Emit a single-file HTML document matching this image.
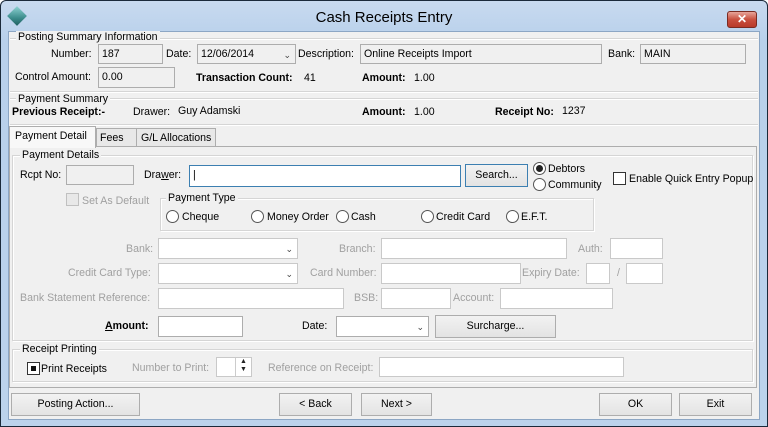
<!DOCTYPE html>
<html><head><meta charset="utf-8"><style>
*{box-sizing:border-box;margin:0;padding:0}
body{width:768px;height:427px;overflow:hidden;background:#fff;font-family:"Liberation Sans",sans-serif;font-size:10.6px;color:#000;position:relative}
.a{position:absolute;white-space:nowrap}
.frame{position:absolute;left:0;top:0;width:768px;height:427px;border:1px solid #1b2a3a;border-radius:6px 6px 0 0;background:linear-gradient(#c8daef,#b8d0eb 40px,#bcd3ec);}
.client{position:absolute;left:8px;top:31px;width:752px;height:389px;background:#f0f0f0;border:1px solid #8ca6c4}
.in{position:absolute;background:#fff;border:1px solid #c9c9c9;padding:2px 3px;line-height:14px}
.ro{background:#f0f0f0;border-color:#adadad}
.btn{position:absolute;background:linear-gradient(#f2f2f2,#e3e3e3);border:1px solid #adadad;text-align:center;line-height:20px}
.g{color:#a0a0a0}
.b{font-weight:bold}
.line{position:absolute;height:2px;border-top:1px solid #d5d5d5;border-bottom:1px solid #fff}
.grp{position:absolute;border:1px solid #d5d5d5;box-shadow:inset 1px 1px 0 #fff, 1px 1px 0 #fff}
.lbl{position:absolute;background:#f0f0f0;padding:0 2px;white-space:nowrap}
.rad{position:absolute;width:13px;height:13px;border:1px solid #555;border-radius:50%;background:#fff}
.chk{position:absolute;width:13px;height:13px;border:1px solid #333;background:#fff}
.dd{position:absolute;right:4px;top:3px;font-size:9px;color:#444}
</style></head><body>
<div class="frame"></div>
<div class="a" style="left:8px;top:9px;width:14px;height:14px;transform:rotate(45deg);background:linear-gradient(135deg,#8fd3d3,#3c8c8c 60%,#1f5f5f);margin-left:2px"></div>
<div class="a" style="left:0;width:768px;top:9px;text-align:center;font-size:15px;color:#000">Cash Receipts Entry</div>
<div class="a" style="left:727px;top:11px;width:30px;height:17px;border:1px solid #7a2b22;border-radius:3px;background:linear-gradient(#e7a59a,#c9503f 50%,#b93a2a);color:#fff;font-weight:bold;text-align:center;line-height:15px;font-size:12px">✕</div>
<div class="client"></div>

<div class="line" style="left:10px;top:38px;width:748px"></div>
<div class="lbl" style="left:16px;top:31px">Posting Summary Information</div>
<div class="a" style="left:51px;top:48px">Number:</div>
<div class="in ro" style="left:98px;top:44px;width:65px;height:20px">187</div>
<div class="a" style="left:166px;top:48px">Date:</div>
<div class="in ro" style="left:197px;top:44px;width:99px;height:20px">12/06/2014<span class="dd">&#8964;</span></div>
<div class="a" style="left:298px;top:48px">Description:</div>
<div class="in ro" style="left:360px;top:44px;width:242px;height:20px">Online Receipts Import</div>
<div class="a" style="left:608px;top:48px">Bank:</div>
<div class="in ro" style="left:640px;top:44px;width:106px;height:20px">MAIN</div>
<div class="a" style="left:15px;top:71px">Control Amount:</div>
<div class="in ro" style="left:98px;top:67px;width:77px;height:21px">0.00</div>
<div class="a b" style="left:196px;top:72px">Transaction Count:</div>
<div class="a" style="left:304px;top:72px">41</div>
<div class="a b" style="left:362px;top:72px">Amount:</div>
<div class="a" style="left:414px;top:72px">1.00</div>
<div class="line" style="left:10px;top:91px;width:748px"></div>
<div class="line" style="left:10px;top:98px;width:748px"></div>
<div class="lbl" style="left:16px;top:93px">Payment Summary</div>
<div class="a b" style="left:12px;top:106px">Previous Receipt:-</div>
<div class="a" style="left:133px;top:106px">Drawer:</div>
<div class="a" style="left:178px;top:105px">Guy Adamski</div>
<div class="a b" style="left:362px;top:106px">Amount:</div>
<div class="a" style="left:414px;top:106px">1.00</div>
<div class="a b" style="left:495px;top:106px">Receipt No:</div>
<div class="a" style="left:562px;top:105px">1237</div>
<div class="line" style="left:10px;top:124px;width:748px"></div>

<div class="a" style="left:9px;top:146px;width:748px;height:242px;border:1px solid #adadad;background:#f0f0f0"></div>
<div class="a" style="left:96px;top:128px;width:41px;height:19px;border:1px solid #adadad;background:#e8e8e8;padding:3px 3px">Fees</div>
<div class="a" style="left:136px;top:128px;width:80px;height:19px;border:1px solid #adadad;background:#e8e8e8;padding:3px 4px">G/L Allocations</div>
<div class="a" style="left:9px;top:126px;width:87px;height:22px;border:1px solid #adadad;border-bottom:none;background:#f8f8f8;padding:3px 5px">Payment Detail</div>

<div class="grp" style="left:12px;top:155px;width:741px;height:186px"></div>
<div class="lbl" style="left:20px;top:149px">Payment Details</div>
<div class="a" style="left:20px;top:169px">Rcpt No:</div>
<div class="in ro" style="left:66px;top:165px;width:68px;height:20px"></div>
<div class="a" style="left:144px;top:169px">Dra<u>w</u>er:</div>
<div class="in" style="left:189px;top:165px;width:272px;height:22px;border-color:#3c7fb1">|</div>
<div class="btn" style="left:465px;top:164px;width:63px;height:23px;border-color:#3c7fb1">Search...</div>
<div class="rad" style="left:533px;top:162px"><div style="margin:2px;width:7px;height:7px;border-radius:50%;background:#222"></div></div>
<div class="a" style="left:548px;top:163px">Debtors</div>
<div class="rad" style="left:533px;top:178px"></div>
<div class="a" style="left:548px;top:179px">Community</div>
<div class="chk" style="left:613px;top:172px"></div>
<div class="a" style="left:629px;top:173px">Enable Quick Entry Popup</div>
<div class="chk" style="left:66px;top:193px;border-color:#c0c0c0;background:#e8e8e8"></div>
<div class="a g" style="left:82px;top:195px">Set As Default</div>
<div class="grp" style="left:160px;top:198px;width:434px;height:33px"></div>
<div class="lbl" style="left:166px;top:192px">Payment Type</div>
<div class="rad" style="left:166px;top:210px"></div><div class="a" style="left:182px;top:211px">Cheque</div>
<div class="rad" style="left:251px;top:210px"></div><div class="a" style="left:267px;top:211px">Money Order</div>
<div class="rad" style="left:336px;top:210px"></div><div class="a" style="left:351px;top:211px">Cash</div>
<div class="rad" style="left:421px;top:210px"></div><div class="a" style="left:436px;top:211px">Credit Card</div>
<div class="rad" style="left:506px;top:210px"></div><div class="a" style="left:521px;top:211px">E.F.T.</div>

<div class="a g" style="left:126px;top:243px">Bank:</div>
<div class="in" style="left:158px;top:238px;width:140px;height:21px"><span class="dd">&#8964;</span></div>
<div class="a g" style="left:339px;top:243px">Branch:</div>
<div class="in" style="left:381px;top:238px;width:186px;height:21px"></div>
<div class="a g" style="left:578px;top:243px">Auth:</div>
<div class="in" style="left:610px;top:238px;width:53px;height:21px"></div>
<div class="a g" style="left:68px;top:267px">Credit Card Type:</div>
<div class="in" style="left:158px;top:263px;width:140px;height:21px"><span class="dd">&#8964;</span></div>
<div class="a g" style="left:310px;top:267px">Card Number:</div>
<div class="in" style="left:381px;top:263px;width:140px;height:21px"></div>
<div class="a g" style="left:522px;top:267px">Expiry Date:</div>
<div class="in" style="left:586px;top:263px;width:24px;height:21px"></div>
<div class="a g" style="left:617px;top:267px">/</div>
<div class="in" style="left:626px;top:263px;width:37px;height:21px"></div>
<div class="a g" style="left:20px;top:292px">Bank Statement Reference:</div>
<div class="in" style="left:158px;top:288px;width:186px;height:21px"></div>
<div class="a g" style="left:354px;top:292px">BSB:</div>
<div class="in" style="left:381px;top:288px;width:70px;height:21px"></div>
<div class="a g" style="left:453px;top:292px">Account:</div>
<div class="in" style="left:500px;top:288px;width:113px;height:21px"></div>
<div class="a b" style="left:105px;top:320px"><u>A</u>mount:</div>
<div class="in" style="left:158px;top:316px;width:85px;height:21px;border-color:#adadad"></div>
<div class="a" style="left:302px;top:320px">Date:</div>
<div class="in" style="left:336px;top:316px;width:93px;height:21px;border-color:#adadad"><span class="dd">&#8964;</span></div>
<div class="btn" style="left:435px;top:315px;width:121px;height:23px">Surcharge...</div>

<div class="grp" style="left:12px;top:349px;width:741px;height:33px"></div>
<div class="lbl" style="left:20px;top:343px">Receipt Printing</div>
<div class="chk" style="left:27px;top:362px"><div style="margin:3px;width:5px;height:5px;background:#111"></div></div>
<div class="a" style="left:41px;top:363px">Print Receipts</div>
<div class="a g" style="left:132px;top:362px">Number to Print:</div>
<div class="in" style="left:216px;top:357px;width:36px;height:20px"></div>
<div class="a" style="left:235px;top:358px;width:16px;height:18px;border-left:1px solid #ccc;font-size:7px;line-height:8px;text-align:center;color:#222">▲<br>▼</div>
<div class="a g" style="left:268px;top:362px">Reference on Receipt:</div>
<div class="in" style="left:379px;top:357px;width:245px;height:20px"></div>

<div class="btn" style="left:11px;top:393px;width:129px;height:23px">Posting Action...</div>
<div class="btn" style="left:279px;top:393px;width:73px;height:23px">&lt; Back</div>
<div class="btn" style="left:361px;top:393px;width:71px;height:23px">Next &gt;</div>
<div class="btn" style="left:599px;top:393px;width:73px;height:23px">OK</div>
<div class="btn" style="left:679px;top:393px;width:73px;height:23px">Exit</div>
</body></html>
